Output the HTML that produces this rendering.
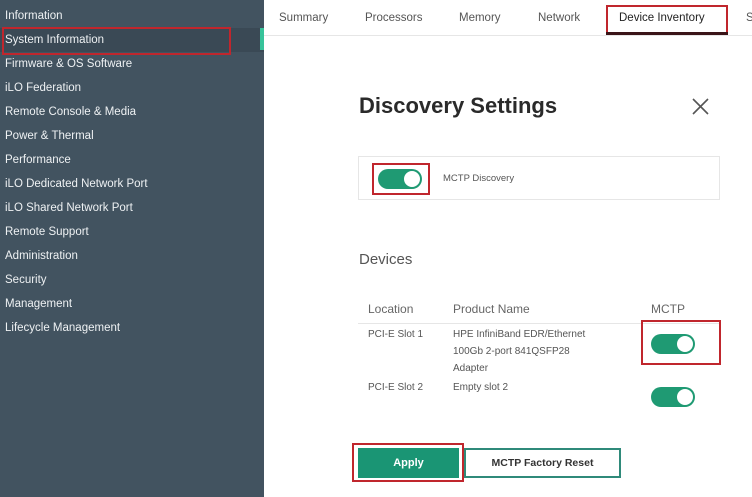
<!DOCTYPE html>
<html><head><style>
body{margin:0;width:752px;height:497px;overflow:hidden;background:#fff;font-family:"Liberation Sans",sans-serif;position:relative}
.sb{position:absolute;left:0;top:0;width:264px;height:497px;background:#425360}
.sb div{position:absolute;left:5px;font-size:11.5px;color:#eef1f3;line-height:14px}
.a{position:absolute}
.t{position:absolute;font-size:11.5px;color:#555;top:12px}
.tg{position:absolute;width:44px;height:20px;border-radius:10px;background:#1f9a73}
.tg::after{content:"";position:absolute;right:1px;top:1px;width:18px;height:18px;border-radius:50%;background:#fff;box-sizing:border-box;border:1px solid #1f9a73}
.red{position:absolute;border:2px solid #c0262d;box-sizing:border-box}
.c{position:absolute;font-size:10px;color:#555;line-height:17px}
</style></head><body>
<div class="sb">
<div class="a" style="left:0;top:28px;width:264px;height:24px;background:#3a4955"></div>
<div class="a" style="left:260px;top:28px;width:4px;height:22px;background:#37c39a"></div>
<div style="top:9px">Information</div>
<div style="top:33px">System Information</div>
<div style="top:57px">Firmware &amp; OS Software</div>
<div style="top:81px">iLO Federation</div>
<div style="top:105px">Remote Console &amp; Media</div>
<div style="top:129px">Power &amp; Thermal</div>
<div style="top:153px">Performance</div>
<div style="top:177px">iLO Dedicated Network Port</div>
<div style="top:201px">iLO Shared Network Port</div>
<div style="top:225px">Remote Support</div>
<div style="top:249px">Administration</div>
<div style="top:273px">Security</div>
<div style="top:297px">Management</div>
<div style="top:321px">Lifecycle Management</div>
</div>
<div class="red" style="left:2px;top:27px;width:229px;height:28px"></div>
<div class="a" style="left:264px;top:35px;width:488px;height:1px;background:#e6e6e6"></div>
<div class="t" style="left:279px">Summary</div>
<div class="t" style="left:365px">Processors</div>
<div class="t" style="left:459px">Memory</div>
<div class="t" style="left:538px">Network</div>
<div class="t" style="left:619px;color:#222">Device Inventory</div>
<div class="t" style="left:746px">S</div>
<div class="red" style="left:606px;top:5px;width:122px;height:30px"></div>
<div class="a" style="left:606px;top:32px;width:122px;height:3px;background:#3a1418"></div>
<div class="a" style="left:359px;top:93px;font-size:22px;font-weight:bold;color:#2a2a2a">Discovery Settings</div>
<svg class="a" style="left:692px;top:98px" width="17" height="17"><path d="M1 1L16 16M16 1L1 16" stroke="#555" stroke-width="1.6"/></svg>
<div class="a" style="left:358px;top:156px;width:362px;height:44px;border:1px solid #e6e6e6;box-sizing:border-box"></div>
<div class="tg" style="left:378px;top:169px"></div>
<div class="red" style="left:372px;top:163px;width:58px;height:32px"></div>
<div class="a" style="left:443px;top:173px;font-size:9.5px;color:#555">MCTP Discovery</div>
<div class="a" style="left:359px;top:251px;font-size:15px;color:#555">Devices</div>
<div class="a" style="left:368px;top:302px;font-size:12px;color:#666">Location</div>
<div class="a" style="left:453px;top:302px;font-size:12px;color:#666">Product Name</div>
<div class="a" style="left:651px;top:302px;font-size:12px;color:#666">MCTP</div>
<div class="a" style="left:358px;top:323px;width:362px;height:1px;background:#e6e6e6"></div>
<div class="c" style="left:368px;top:326px">PCI-E Slot 1</div>
<div class="c" style="left:453px;top:326px">HPE InfiniBand EDR/Ethernet<br>100Gb 2-port 841QSFP28<br>Adapter</div>
<div class="c" style="left:368px;top:379px">PCI-E Slot 2</div>
<div class="c" style="left:453px;top:379px">Empty slot 2</div>
<div class="tg" style="left:651px;top:334px"></div>
<div class="red" style="left:641px;top:320px;width:80px;height:45px"></div>
<div class="tg" style="left:651px;top:387px"></div>
<div class="a" style="left:358px;top:448px;width:101px;height:30px;background:#1a9574;color:#fff;font-size:11px;font-weight:bold;text-align:center;line-height:31px">Apply</div>
<div class="red" style="left:352px;top:443px;width:112px;height:39px"></div>
<div class="a" style="left:464px;top:448px;width:157px;height:30px;border:2px solid #2f8a7a;box-sizing:border-box;color:#333;font-size:10.5px;font-weight:bold;text-align:center;line-height:27px">MCTP Factory Reset</div>
</body></html>
